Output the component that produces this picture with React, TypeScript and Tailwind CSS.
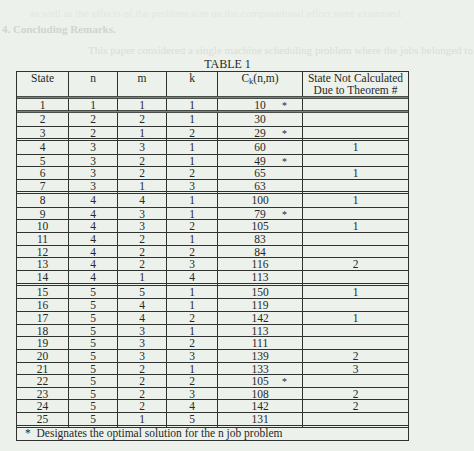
import React from "react";

type Row = [number, number, number, number, number, boolean, string];

const groups: Row[][] = [
  [[1, 1, 1, 1, 10, true, ""]],
  [
    [2, 2, 2, 1, 30, false, ""],
    [3, 2, 1, 2, 29, true, ""],
  ],
  [
    [4, 3, 3, 1, 60, false, "1"],
    [5, 3, 2, 1, 49, true, ""],
    [6, 3, 2, 2, 65, false, "1"],
    [7, 3, 1, 3, 63, false, ""],
  ],
  [
    [8, 4, 4, 1, 100, false, "1"],
    [9, 4, 3, 1, 79, true, ""],
    [10, 4, 3, 2, 105, false, "1"],
    [11, 4, 2, 1, 83, false, ""],
    [12, 4, 2, 2, 84, false, ""],
    [13, 4, 2, 3, 116, false, "2"],
    [14, 4, 1, 4, 113, false, ""],
  ],
  [
    [15, 5, 5, 1, 150, false, "1"],
    [16, 5, 4, 1, 119, false, ""],
    [17, 5, 4, 2, 142, false, "1"],
    [18, 5, 3, 1, 113, false, ""],
    [19, 5, 3, 2, 111, false, ""],
    [20, 5, 3, 3, 139, false, "2"],
    [21, 5, 2, 1, 133, false, "3"],
    [22, 5, 2, 2, 105, true, ""],
    [23, 5, 2, 3, 108, false, "2"],
    [24, 5, 2, 4, 142, false, "2"],
    [25, 5, 1, 5, 131, false, ""],
  ],
];

const grid = "grid grid-cols-[52px_49px_49px_51px_85px_105px]";
const cell = "border-r border-[#2f322f] flex justify-center items-start leading-[12px]";
const lastCell = "flex justify-center items-start leading-[12px]";

function DataRow({ r, first, h }: { r: Row; first: boolean; h: string }) {
  return (
    <div className={`${grid} ${h} ${first ? "" : "border-t border-[#2f322f]"}`}>
      <div className={cell}>{r[0]}</div>
      <div className={cell}>{r[1]}</div>
      <div className={cell}>{r[2]}</div>
      <div className={cell}>{r[3]}</div>
      <div className={`${cell} relative`}>
        <span>{r[4]}</span>
        {r[5] && <span className="absolute left-[64px] top-[1px] text-[10px]">*</span>}
      </div>
      <div className={lastCell}>{r[6]}</div>
    </div>
  );
}

function DoubleSep() {
  return (
    <div className={`${grid} h-[3px] border-y border-[#2f322f]`}>
      <div className="border-r border-[#2f322f]" />
      <div className="border-r border-[#2f322f]" />
      <div className="border-r border-[#2f322f]" />
      <div className="border-r border-[#2f322f]" />
      <div className="border-r border-[#2f322f]" />
      <div />
    </div>
  );
}

function GraySep() {
  return <div className="h-[3px] bg-[#7b807b] border-y border-[#4a4e4a]" />;
}

const rowHeights = ["h-[11px]", "h-[12.5px]", "h-[12.5px]", "h-[12.7px]", "h-[12.64px]"];

export default function App() {
  return (
    <div
      className="w-[474px] h-[451px] bg-[#edf1ec] overflow-hidden text-[#262926] text-[11.5px]"
      style={{ fontFamily: '"Liberation Serif", "Times New Roman", serif' }}
    >
      <div className="pt-[6px] text-[11px] leading-[14px] whitespace-nowrap">
        <div className="h-[14px] pl-[30px] text-[#e2e7e2]">
          as well as the effects of the problem size on the computational effort were examined.
        </div>
        <div className="h-[14px] mt-[2px] pl-[2px] font-bold text-[#cfd5cf]">4. Concluding Remarks.</div>
        <div className="h-[14px] mt-[7px] pl-[88px] text-[#d8ded8]">
          This paper considered a single machine scheduling problem where the jobs belonged to
        </div>
      </div>
      <div className="w-[455px] h-[14px] text-center text-[12px] leading-[14px]">TABLE 1</div>
      <div className="ml-[16px] w-[393px] border border-[#2f322f]">
        <div className={`${grid} h-[24px]`}>
          <div className={cell}>State</div>
          <div className={cell}>n</div>
          <div className={cell}>m</div>
          <div className={cell}>k</div>
          <div className={cell}>
            <span>
              C<sub className="text-[8.5px] align-baseline relative top-[2px]">k</sub>(n,m)
            </span>
          </div>
          <div className="flex flex-col items-center leading-[12px]">
            <span>State Not Calculated</span>
            <span>Due to Theorem #</span>
          </div>
        </div>
        <GraySep />
        {groups.map((g, gi) => (
          <React.Fragment key={gi}>
            {g.map((r, ri) => (
              <DataRow key={r[0]} r={r} first={ri === 0} h={rowHeights[gi]} />
            ))}
            {gi === 0 ? <GraySep /> : <DoubleSep />}
          </React.Fragment>
        ))}
        <div className="h-[12px] pl-[8px] leading-[11px] whitespace-nowrap">
          *&nbsp; Designates the optimal solution for the n job problem
        </div>
      </div>
    </div>
  );
}
